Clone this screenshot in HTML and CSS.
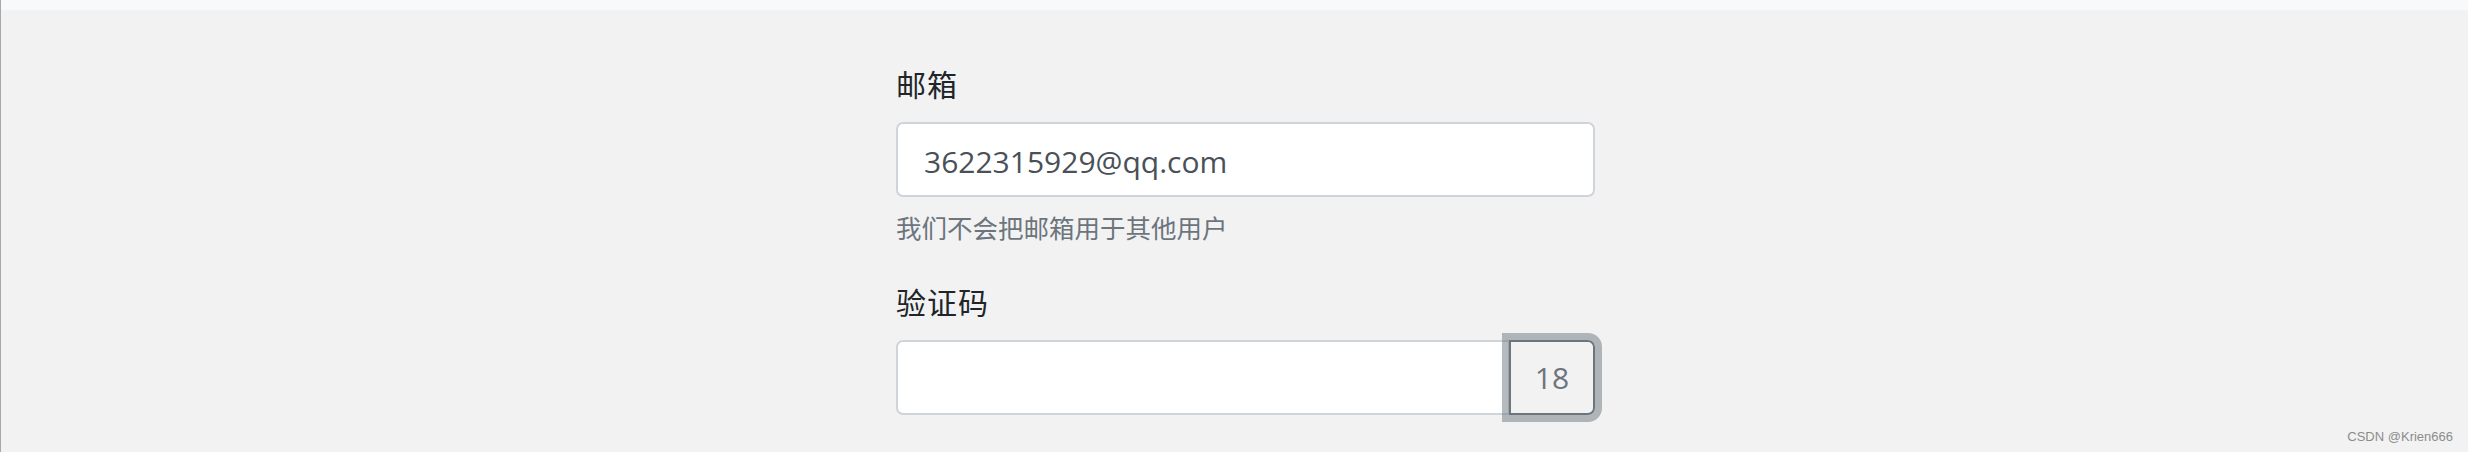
FILE: index.html
```html
<!DOCTYPE html>
<html lang="zh-CN">
<head>
<meta charset="utf-8">
<title>表单</title>
<link rel="stylesheet" href="styles.css">
</head>
<body>
<div class="topbar"></div>
<main class="wrap">
  <form class="form">
    <div class="field">
      <label class="label" for="email">邮箱</label>
      <input class="control" id="email" type="text" value="3622315929@qq.com">
      <div class="help">我们不会把邮箱用于其他用户</div>
    </div>
    <div class="field">
      <label class="label" for="code">验证码</label>
      <div class="group">
        <input class="control control-group" id="code" type="text">
        <button class="btn" type="button">18</button>
      </div>
    </div>
  </form>
</main>
<div class="watermark">CSDN @Krien666</div>
</body>
</html>
```

FILE: styles.css
```css
html, body {
  margin: 0;
  height: 100%;
}
body {
  box-sizing: border-box;
  background: #f2f2f2;
  border-left: 1px solid #a8a8a8;
  position: relative;
  overflow: hidden;
  font-family: "Noto Sans CJK SC", "Open Sans", sans-serif;
}
.topbar {
  height: 10px;
  background: #f8f9fa;
}
.wrap {
  padding: 51px 0 0 895px;
}
.form {
  width: 699px;
  display: flex;
  flex-direction: column;
  gap: 33px;
}
.field {
  display: flex;
  flex-direction: column;
}
.label {
  font-size: 30px;
  line-height: 45px;
  letter-spacing: 1px;
  color: #212529;
  margin-bottom: 16px;
}
.control {
  box-sizing: border-box;
  height: 75px;
  width: 100%;
  border: 2px solid #ced4da;
  border-radius: 7px;
  background: #fff;
  padding: 4px 24px 0 26px;
  font-family: "Open Sans", "Noto Sans", sans-serif;
  font-size: 30px;
  color: #495057;
  outline: none;
}
.help {
  margin-top: 10px;
  font-size: 25.5px;
  line-height: 39px;
  color: #6c757d;
}
.group {
  display: flex;
  align-items: stretch;
}
.control-group {
  flex: 1;
  width: auto;
  min-width: 0;
  border-top-right-radius: 0;
  border-bottom-right-radius: 0;
}
.btn {
  position: relative;
  z-index: 1;
  margin-left: -1px;
  box-sizing: border-box;
  height: 75px;
  width: 86px;
  padding: 0;
  border: 2px solid #6c757d;
  border-radius: 0 7px 7px 0;
  background: transparent;
  color: #6c757d;
  font-family: "Open Sans", "Noto Sans", sans-serif;
  font-size: 30px;
  box-shadow: 0 0 0 7px rgba(108, 117, 125, 0.5);
}
.watermark {
  position: absolute;
  right: 15px;
  bottom: 8px;
  font-family: "Liberation Sans", Arial, sans-serif;
  font-size: 13px;
  line-height: 15px;
  color: #8c8c8c;
}
```
